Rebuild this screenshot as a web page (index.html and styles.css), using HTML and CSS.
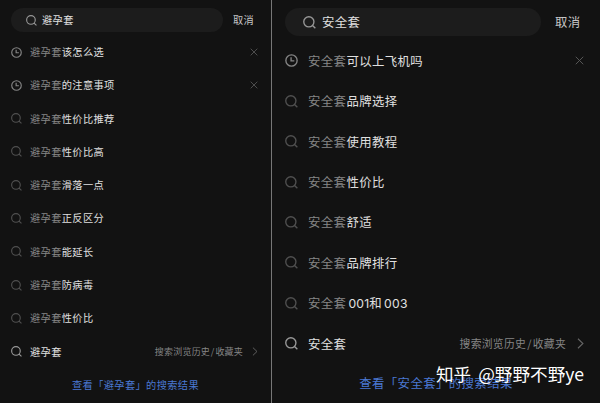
FILE: index.html
```
<!DOCTYPE html>
<html lang="zh-CN">
<head>
<meta charset="utf-8">
<title>搜索</title>
<link rel="stylesheet" href="styles.css">
</head>
<body>
<svg class="defs" width="0" height="0">
  <symbol id="search" viewBox="0 0 12 12"><circle cx="5.4" cy="5.4" r="4.7"/><path d="M8.8 8.8L11.4 11.4"/></symbol>
  <symbol id="clock" viewBox="0 0 12 12"><circle cx="6" cy="6" r="5.2"/><path d="M5.6 3V6.3H8.6"/></symbol>
  <symbol id="close" viewBox="0 0 12 12"><path d="M1 1L11 11M11 1L1 11"/></symbol>
  <symbol id="chevron" viewBox="0 0 6 10"><path d="M.7 .7L5.2 5L.7 9.3"/></symbol>
</svg>
<main class="screen">
  <section class="panel left">
    <header class="top"><div class="field"><svg class="icon"><use href="#search"/></svg><span>避孕套</span></div><span class="cancel">取消</span></header>
    <ul class="list">
      <li class="row recent"><svg class="icon"><use href="#clock"/></svg><span class="label"><i>避孕套</i>该怎么选</span><svg class="close"><use href="#close"/></svg></li>
      <li class="row recent"><svg class="icon"><use href="#clock"/></svg><span class="label"><i>避孕套</i>的注意事项</span><svg class="close"><use href="#close"/></svg></li>
      <li class="row"><svg class="icon"><use href="#search"/></svg><span class="label"><i>避孕套</i>性价比推荐</span></li>
      <li class="row"><svg class="icon"><use href="#search"/></svg><span class="label"><i>避孕套</i>性价比高</span></li>
      <li class="row"><svg class="icon"><use href="#search"/></svg><span class="label"><i>避孕套</i>滑落一点</span></li>
      <li class="row"><svg class="icon"><use href="#search"/></svg><span class="label"><i>避孕套</i>正反区分</span></li>
      <li class="row"><svg class="icon"><use href="#search"/></svg><span class="label"><i>避孕套</i>能延长</span></li>
      <li class="row"><svg class="icon"><use href="#search"/></svg><span class="label"><i>避孕套</i>防病毒</span></li>
      <li class="row"><svg class="icon"><use href="#search"/></svg><span class="label"><i>避孕套</i>性价比</span></li>
      <li class="row history"><svg class="icon"><use href="#search"/></svg><span class="label">避孕套</span><span class="note">搜索浏览历史<b>/</b>收藏夹</span><svg class="chevron"><use href="#chevron"/></svg></li>
    </ul>
    <a class="more">查看「避孕套」的搜索结果</a>
  </section>
  <section class="panel right">
    <header class="top"><div class="field"><svg class="icon"><use href="#search"/></svg><span>安全套</span></div><span class="cancel">取消</span></header>
    <ul class="list">
      <li class="row recent"><svg class="icon"><use href="#clock"/></svg><span class="label"><i>安全套</i>可以上飞机吗</span><svg class="close"><use href="#close"/></svg></li>
      <li class="row"><svg class="icon"><use href="#search"/></svg><span class="label"><i>安全套</i>品牌选择</span></li>
      <li class="row"><svg class="icon"><use href="#search"/></svg><span class="label"><i>安全套</i>使用教程</span></li>
      <li class="row"><svg class="icon"><use href="#search"/></svg><span class="label"><i>安全套</i>性价比</span></li>
      <li class="row"><svg class="icon"><use href="#search"/></svg><span class="label"><i>安全套</i>舒适</span></li>
      <li class="row"><svg class="icon"><use href="#search"/></svg><span class="label"><i>安全套</i>品牌排行</span></li>
      <li class="row"><svg class="icon"><use href="#search"/></svg><span class="label"><i>安全套</i><span class="num">001</span>和<span class="num">003</span></span></li>
      <li class="row history"><svg class="icon"><use href="#search"/></svg><span class="label">安全套</span><span class="note">搜索浏览历史<b>/</b>收藏夹</span><svg class="chevron"><use href="#chevron"/></svg></li>
    </ul>
    <a class="more">查看「安全套」的搜索结果</a>
  </section>
  <div class="watermark"><span>知乎</span><span>@野野不野ye</span></div>
</main>
</body>
</html>
```
FILE: styles.css
```
* { box-sizing: border-box; }
body { margin: 0; background: #121212; font-family: "Noto Sans CJK SC", sans-serif; color: #e0e0e0; }
.defs { display: block; height: 0; }
.screen { position: relative; display: flex; width: 600px; height: 403px; overflow: hidden; }
.panel { display: flex; flex-direction: column; white-space: nowrap; line-height: 1; }
svg { fill: none; stroke: #979797; stroke-width: 1.25; flex: none; }
.top, .field, .row, .more { display: flex; align-items: center; }
.field { background: #1c1c1c; border-radius: 20px; }
.cancel { color: #c6c6c6; }
.list { list-style: none; margin: 0; padding: 0; }
.row .icon { stroke: #505050; }
.row.recent .icon { stroke: #858585; }
.row.history .icon { stroke: #999; }
.label { font-weight: 400; }
.label i { font-style: normal; color: #858585; }
.close { margin-left: auto; stroke: #5a5a5a; }
.note { margin-left: auto; color: #858585; }
.note b { font-weight: 400; }
.row .chevron { stroke: #666; stroke-width: 1; }
.more { justify-content: center; color: #4a78d2; }
.num { font-family: Inter, sans-serif; font-weight: 400; }

.left { width: 272px; padding: 8px 13px 0 11px; border-right: 1.5px solid #777; font-size: 10.2px; letter-spacing: .4px; }
.left .top { height: 24px; margin-bottom: 3.4px; }
.left .field { width: 212px; height: 24px; padding-left: 15px; gap: 5px; margin-right: 10px; }
.left .icon { width: 11px; height: 11px; }
.left .row { height: 33.3px; }
.left .row .icon { margin-right: 8px; }
.left .close { width: 8px; height: 8px; }
.left .note { font-size: 9px; letter-spacing: .2px; }
.left .note b { padding: 0 .8px; }
.left .chevron { width: 6px; height: 9px; margin-left: 9px; }
.left .more { height: 33px; padding-left: 2px; }

.right { width: 328px; padding: 8px 16px 0 13px; font-size: 12.4px; letter-spacing: .4px; }
.right .top { height: 28px; margin-bottom: 4.8px; }
.right .field { width: 256px; height: 28px; padding-left: 18px; gap: 6px; margin-right: 14px; }
.right .icon { width: 13px; height: 13px; }
.right .row { height: 40.4px; }
.right .row .icon { margin-right: 10px; }
.right .close { width: 9px; height: 9px; }
.right .note { font-size: 10.8px; letter-spacing: .3px; }
.right .note b { padding: 0 1px; }
.right .chevron { width: 7px; height: 11px; margin-left: 11px; }
.right .more { height: 41px; padding-left: 3px; }
.right .num { margin-left: 2px; font-size: 12.2px; letter-spacing: .2px; }

.watermark { position: absolute; left: 436px; top: 363px; display: flex; gap: 7px; font-size: 17.6px; line-height: 22px; color: #fff; white-space: nowrap; }
```
